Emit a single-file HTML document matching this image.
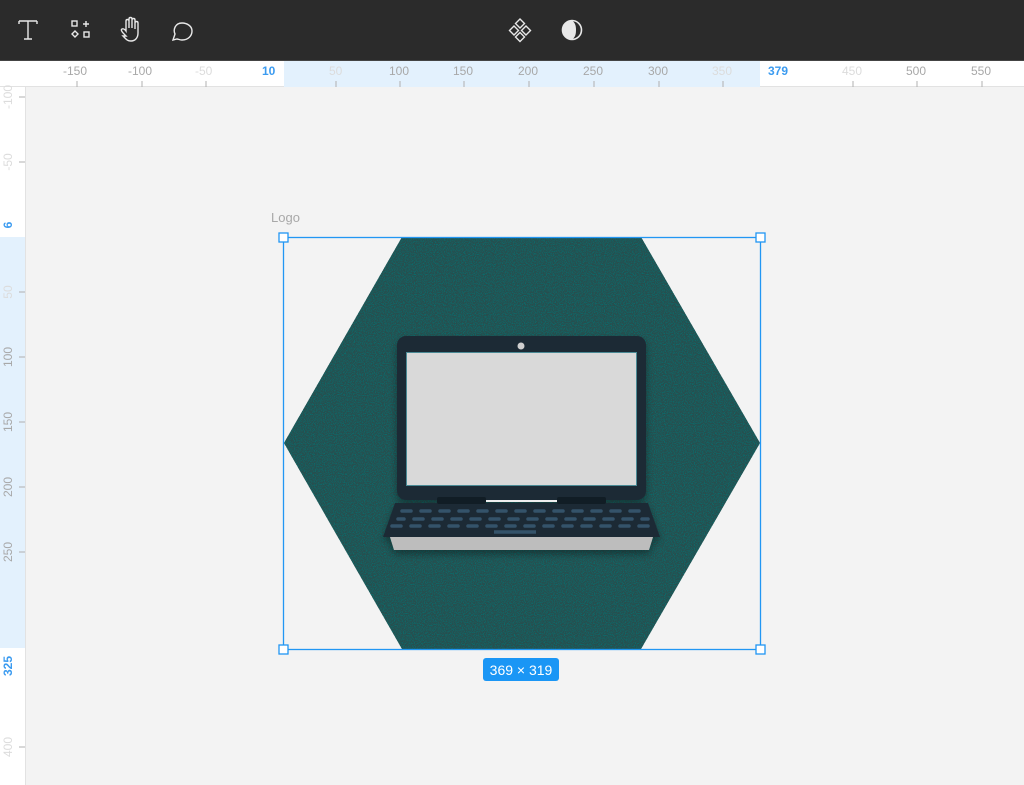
<!DOCTYPE html>
<html><head><meta charset="utf-8"><style>
*{margin:0;padding:0;box-sizing:border-box}
body{width:1024px;height:785px;background:#f3f3f3;position:relative;overflow:hidden;font-family:"Liberation Sans",sans-serif}
.tb{position:absolute;left:0;top:0;width:1024px;height:60px;background:#2b2b2b}
.hr{position:absolute;left:0;top:60px;width:1024px;height:27px;background:#fff;border-bottom:1px solid #e2e2e2;border-top:1px solid #444}
.vr{position:absolute;left:0;top:87px;width:26px;height:698px;background:#fff;border-right:1px solid #e2e2e2}
.t{position:absolute;font-size:12px;color:#a8a8a8}
.vt{position:absolute;font-size:12px;color:#a8a8a8;transform:rotate(-90deg);transform-origin:center;width:40px;text-align:center}
.f{color:#dcdcdc}
.b{color:#3b9bf0;font-weight:bold}
</style></head><body>
<div class="tb">
<svg width="1024" height="60" style="position:absolute;left:0;top:0" fill="none" stroke="#e8e8e8" stroke-width="1.4">
<path d="M19 21h18M19 21v3M37 21v3M28 21v18M24 39h8"/>
<rect x="72" y="21" width="5" height="5"/><path d="M86 21v6M83 24h6"/><path d="M75 31l3 3-3 3-3-3z"/><rect x="84" y="32" width="5" height="5"/>
<path d="M126 36c-3-3-6-6-4-7 2-1 4 2 4 2V21c0-2 3-2 3 0v7V19c0-2 3-2 3 0v9V20c0-2 3-2 3 0v9V23c0-2 3-2 3 0v10c0 5-3 8-7 8s-5-2-8-5z"/>
<path d="M173 40l2-6c-2-4 0-11 7-11 5 0 10 3 10 8s-4 9-10 9c-2 0-4-1-5-1z"/>
<path d="M520 19l4.5 4.5-4.5 4.5-4.5-4.5zM514 26l4.5 4.5-4.5 4.5-4.5-4.5zM526 26l4.5 4.5-4.5 4.5-4.5-4.5zM520 32.5l4.5 4.5-4.5 4.5-4.5-4.5z"/>
<circle cx="572" cy="30" r="9.5" stroke-width="1.6"/>
<path d="M572 20.5a9.5 9.5 0 0 0 0 19c3-2 4-5 4-9.5s-1-7.5-4-9.5z" fill="#e8e8e8" stroke="none"/>
</svg>
</div>
<div class="hr">
<div style="position:absolute;left:284px;top:0;width:476px;height:26px;background:#e3f1fd"></div>
<svg width="1024" height="27" style="position:absolute;left:0;top:0" stroke="#b0b0b0"><path d="M77 20v6M142 20v6M206 20v6M336 20v6M400 20v6M464 20v6M529 20v6M594 20v6M659 20v6M723 20v6M853 20v6M917 20v6M982 20v6"/></svg>
<span class="t" style="left:63px;top:3px">-150</span><span class="t" style="left:128px;top:3px">-100</span><span class="t f" style="left:195px;top:3px">-50</span>
<span class="t b" style="left:262px;top:3px">10</span><span class="t f" style="left:329px;top:3px">50</span><span class="t" style="left:389px;top:3px">100</span><span class="t" style="left:453px;top:3px">150</span><span class="t" style="left:518px;top:3px">200</span><span class="t" style="left:583px;top:3px">250</span><span class="t" style="left:648px;top:3px">300</span><span class="t f" style="left:712px;top:3px">350</span><span class="t b" style="left:768px;top:3px">379</span><span class="t f" style="left:842px;top:3px">450</span><span class="t" style="left:906px;top:3px">500</span><span class="t" style="left:971px;top:3px">550</span>
</div>
<div class="vr">
<div style="position:absolute;left:0;top:150px;width:25px;height:411px;background:#e3f1fd"></div>
<svg width="26" height="698" style="position:absolute;left:0;top:0" stroke="#b0b0b0"><path d="M19 10h6M19 75h6M19 205h6M19 270h6M19 335h6M19 400h6M19 465h6M19 660h6"/></svg>
<div class="vt f" style="left:-12px;top:3px">-100</div><div class="vt f" style="left:-12px;top:68px">-50</div><div class="vt b" style="left:-12px;top:131px">6</div><div class="vt f" style="left:-12px;top:198px">50</div><div class="vt" style="left:-12px;top:263px">100</div><div class="vt" style="left:-12px;top:328px">150</div><div class="vt" style="left:-12px;top:393px">200</div><div class="vt" style="left:-12px;top:458px">250</div><div class="vt b" style="left:-12px;top:572px">325</div><div class="vt f" style="left:-12px;top:653px">400</div>
</div>
<div style="position:absolute;left:271px;top:210px;font-size:13px;color:#a8a8a8">Logo</div>
<svg width="1024" height="785" style="position:absolute;left:0;top:0">
<defs>
<filter id="n" x="0" y="0" width="100%" height="100%"><feTurbulence type="fractalNoise" baseFrequency="1.1" numOctaves="1" seed="3"/><feColorMatrix values="0 0 0 0 0.02  0 0 0 0 0.08  0 0 0 0 0.08  0 0 0 -8 5"/><feComposite in2="SourceGraphic" operator="in"/></filter>
<filter id="s"><feDropShadow dx="0" dy="4" stdDeviation="4" flood-opacity="0.35"/></filter>
</defs>
<polygon points="402,237 641,237 760,443 641,649 402,649 284,443" fill="#0c6a6a"/>
<polygon points="402,237 641,237 760,443 641,649 402,649 284,443" fill="#0c6a6a" filter="url(#n)"/>
<g filter="url(#s)">
<path d="M395 503h253l12 34H383z" fill="#1c2a35"/>
<path d="M390 537h263l-4 13H394z" fill="#bdbdbd"/>
<rect x="397" y="336" width="249" height="164" rx="9" fill="#1c2a35"/>
</g>
<rect x="406" y="352" width="231" height="134" fill="#4a8a95"/>
<rect x="407" y="353" width="229" height="132" fill="#d9d9d9"/>
<circle cx="521" cy="346" r="3.5" fill="#cfcfcf"/>
<rect x="437" y="497" width="49" height="7" rx="2" fill="#111d25"/><rect x="557" y="497" width="49" height="7" rx="2" fill="#111d25"/>
<rect x="486" y="500" width="71" height="2" fill="#eee"/>
<g stroke="#34536a" stroke-width="3.5" stroke-linecap="round" stroke-dasharray="9 10">
<path d="M402 511H640"/><path d="M398 519H648" stroke-dashoffset="3"/><path d="M392 526H656"/>
</g>
<path d="M494 532h42" stroke="#34536a" stroke-width="3.5"/>
<rect x="283.5" y="237.5" width="477" height="412" fill="none" stroke="#2196f3" stroke-width="1.3"/>
<g fill="#fff" stroke="#2196f3" stroke-width="1.3"><rect x="279" y="233" width="9" height="9"/><rect x="756" y="233" width="9" height="9"/><rect x="279" y="645" width="9" height="9"/><rect x="756" y="645" width="9" height="9"/></g>
<rect x="483" y="658" width="76" height="23" rx="3" fill="#1a96f5"/>
<text x="521" y="675" text-anchor="middle" font-size="14" fill="#fff" font-family="Liberation Sans,sans-serif">369 × 319</text>
</svg>
</body></html>
